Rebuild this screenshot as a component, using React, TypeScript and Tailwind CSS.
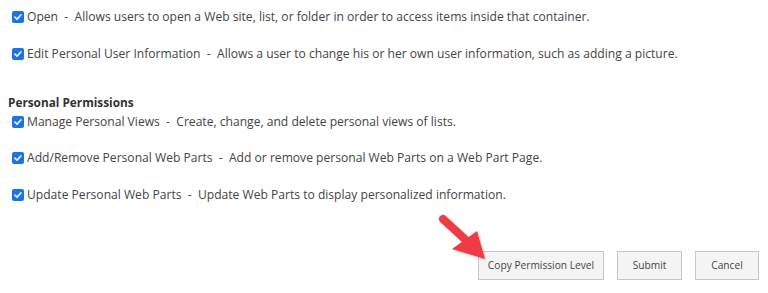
import React from "react";

function Check() {
  return (
    <span className="inline-flex h-[12px] w-[12px] shrink-0 items-center justify-center rounded-[2px] bg-[#1a73e8]">
      <svg viewBox="0 0 12 12" className="h-[10px] w-[10px]">
        <path d="M2.3 6.2 L4.8 8.6 L9.6 3.4" fill="none" stroke="#fff" strokeWidth="1.9" strokeLinecap="round" strokeLinejoin="round" />
      </svg>
    </span>
  );
}

function Row({ title, desc }: { title: string; desc: string }) {
  return (
    <div className="flex h-[20px] items-center gap-[3px] pl-[12px]">
      <Check />
      <span className="whitespace-pre">{title}{"  -  "}{desc}</span>
    </div>
  );
}

export default function App() {
  return (
    <div
      className="relative h-[293px] w-[768px] overflow-hidden bg-white text-[12.1px] text-[#444]"
      style={{ fontFamily: '"Open Sans", "Noto Sans", sans-serif' }}
    >
      <div className="flex flex-col pt-[7px]">
        <Row title="Open" desc="Allows users to open a Web site, list, or folder in order to access items inside that container." />
        <div className="mt-[17px]">
          <Row title="Edit Personal User Information" desc="Allows a user to change his or her own user information, such as adding a picture." />
        </div>
        <div className="mt-[30px] pl-[8px] text-[11.8px] font-bold text-[#333]">Personal Permissions</div>
        <div className="mt-[0px]">
          <Row title="Manage Personal Views" desc="Create, change, and delete personal views of lists." />
        </div>
        <div className="mt-[16px]">
          <Row title="Add/Remove Personal Web Parts" desc="Add or remove personal Web Parts on a Web Part Page." />
        </div>
        <div className="mt-[17px]">
          <Row title="Update Personal Web Parts" desc="Update Web Parts to display personalized information." />
        </div>
      </div>
      <div className="mt-[46px] flex justify-end gap-[13px] pr-[9px] text-[10.2px]">
        <button className="h-[29px] w-[126px] border border-[#c6c6c6] bg-[#f4f4f4] text-[#444]">Copy Permission Level</button>
        <button className="h-[29px] w-[65px] border border-[#c6c6c6] bg-[#f4f4f4] text-[#444]">Submit</button>
        <button className="h-[29px] w-[64px] border border-[#c6c6c6] bg-[#f4f4f4] text-[#444]">Cancel</button>
      </div>
      <svg className="pointer-events-none absolute left-0 top-0" width="768" height="293">
        <defs>
          <filter id="sh" x="-20%" y="-20%" width="140%" height="140%">
            <feDropShadow dx="1" dy="1" stdDeviation="1" floodColor="#000" floodOpacity="0.25" />
          </filter>
        </defs>
        <g filter="url(#sh)" fill="#ef3a44">
          <line x1="443" y1="219" x2="468" y2="242" stroke="#ef3a44" strokeWidth="8" strokeLinecap="round" />
          <polygon points="452,249 477,231 485,259" />
        </g>
      </svg>
    </div>
  );
}
